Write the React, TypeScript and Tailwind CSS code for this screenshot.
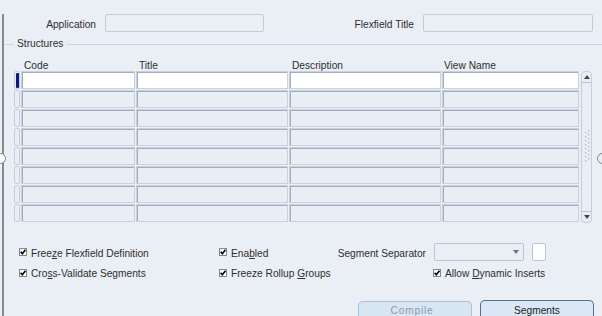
import React from 'react'

const rows = [0, 1, 2, 3, 4, 5, 6, 7]

function Check() {
  return (
    <svg width="8" height="8" viewBox="0 0 8 8" className="shrink-0">
      <rect x="0.5" y="0.5" width="7" height="7" fill="#fff" stroke="#7e8894" />
      <path d="M1.6 3.8 L3.3 5.7 L6.5 1.8" fill="none" stroke="#000" strokeWidth="1.6" />
    </svg>
  )
}

function Cell({ w, white }: { w: string; white?: boolean }) {
  return (
    <div
      className={`${w} h-[18px] border border-[#c6d1e1] shadow-[inset_1px_1px_0_#a3acb8] ${
        white ? 'bg-white' : 'bg-[#e9edf4]'
      }`}
    />
  )
}

export default function App() {
  return (
    <div className="relative w-[602px] h-[316px] overflow-hidden bg-[#eaeef5] pl-[2px] font-['Liberation_Sans',Arial,sans-serif] text-[10.2px] leading-[12px] text-[#2e2e2e]">
      <div className="h-full border-l-2 border-[#858a90]">
        {/* header fields */}
        <div className="flex items-center h-[18px] mt-[14px]">
          <div className="w-[92px] text-right pt-[3px]">Application</div>
          <div className="ml-[9px] w-[159px] h-[18px] border border-[#c3cbd6] rounded-[2px] bg-[#eaeef5]" />
          <div className="w-[150px] text-right pt-[3px]">Flexfield Title</div>
          <div className="ml-[9px] w-[170px] h-[18px] border border-[#c3cbd6] rounded-[2px] bg-[#eaeef5]" />
        </div>

        {/* Structures legend */}
        <div className="flex items-center h-[12px] mt-[6px]">
          <div className="ml-px w-[9px] h-px bg-[#c8d3e3]" />
          <div className="ml-[3px]">Structures</div>
          <div className="ml-[4px] flex-1 h-px bg-[#c8d3e3]" />
        </div>

        {/* column headers */}
        <div className="flex h-[11px] mt-[10px] pl-[17px]">
          <div className="w-[115px] pl-[3px]">Code</div>
          <div className="w-[153px] pl-[3px]">Title</div>
          <div className="w-[153px] pl-[3px]">Description</div>
          <div className="w-[138px] pl-[2px]">View Name</div>
        </div>

        {/* grid */}
        <div className="flex pl-[10px]">
          <div className="flex flex-col gap-px">
            {rows.map((r) => (
              <div key={r} className="flex h-[18px]">
                <div className="w-[6px] h-[18px] rounded-[2px] border border-[#c3cfe1] bg-[#e9eef6] flex items-center">
                  {r === 0 && <div className="ml-px w-[3px] h-[15px] rounded-[1px] bg-[#0b1a7a]" />}
                </div>
                <div className="ml-px" />
                <Cell w="w-[114px]" white={r === 0} />
                <div className="ml-px" />
                <Cell w="w-[152px]" white={r === 0} />
                <div className="ml-px" />
                <Cell w="w-[152px]" white={r === 0} />
                <div className="ml-px" />
                <Cell w="w-[137px]" white={r === 0} />
              </div>
            ))}
          </div>
          {/* scrollbar */}
          <div className="ml-[2px] w-[11px] h-[152px] rounded-[4px] border border-[#c4cedc] bg-[#e9eef5] flex flex-col">
            <div className="h-[11px] border-b border-[#b8c3d2] flex items-center justify-center">
              <svg width="6" height="4" viewBox="0 0 6 4">
                <path d="M0 4 L3 0 L6 4 Z" fill="#3f4650" />
              </svg>
            </div>
            <div className="flex-1 flex items-center justify-center">
              <svg width="8" height="34" viewBox="0 0 8 34">
                {[0, 1, 2, 3, 4, 5, 6, 7].map((i) => (
                  <g key={i} fill="#a9b4c3">
                    <rect x="5" y={i * 4} width="1.3" height="1.3" />
                    <rect x="2" y={i * 4 + 2} width="1.3" height="1.3" />
                  </g>
                ))}
              </svg>
            </div>
            <div className="h-[11px] border-t border-[#b8c3d2] flex items-center justify-center">
              <svg width="6" height="4" viewBox="0 0 6 4">
                <path d="M0 0 L6 0 L3 4 Z" fill="#3f4650" />
              </svg>
            </div>
          </div>
        </div>

        {/* options row 1 */}
        <div className="flex items-center h-[18px] mt-[20px] pl-[15px]">
          <div className="w-[200px] flex items-center gap-[4px]">
            <Check />
            <span className="pt-[3px]">
              Free<span className="underline">z</span>e Flexfield Definition
            </span>
          </div>
          <div className="w-[116px] flex items-center gap-[4px]">
            <Check />
            <span className="pt-[3px]">
              Ena<span className="underline">b</span>led
            </span>
          </div>
          <div className="w-[91px] text-right pt-[3px]">Segment Separator</div>
          <div className="ml-[8px] w-[90px] h-[18px] border border-[#bcc5d1] rounded-[2px] bg-[#eaeef5] flex items-center justify-end pr-[4px]">
            <svg width="6" height="4" viewBox="0 0 6 4">
              <path d="M0 0 L6 0 L3 4 Z" fill="#6b7480" />
            </svg>
          </div>
          <div className="ml-[8px] w-[14px] h-[18px] border border-[#bcc5d1] rounded-[2px] bg-white" />
        </div>

        {/* options row 2 */}
        <div className="flex items-center h-[12px] mt-[6px] pl-[15px]">
          <div className="w-[200px] flex items-center gap-[4px]">
            <Check />
            <span className="pt-px">
              Cro<span className="underline">s</span>s-Validate Segments
            </span>
          </div>
          <div className="w-[214px] flex items-center gap-[4px]">
            <Check />
            <span className="pt-px">
              Freeze Rollup <span className="underline">G</span>roups
            </span>
          </div>
          <div className="flex items-center gap-[4px]">
            <Check />
            <span className="pt-px">
              Allow <span className="underline">D</span>ynamic Inserts
            </span>
          </div>
        </div>

        {/* buttons */}
        <div className="flex items-start mt-[21px] pl-[354px] gap-[8px]">
          <button className="mt-px w-[114px] h-[22px] rounded-t-[5px] border border-b-0 border-[#a9c1d9] bg-[#d8e5f2] text-[#8b9bb0] tracking-[0.8px] flex justify-center pt-[3px] pr-[6px]">
            Compile
          </button>
          <button className="w-[114px] h-[22px] rounded-t-[5px] border border-b-0 border-[#53708f] bg-[#dbe7f4] text-[#222] flex justify-center pt-[4px]">
            Segments
          </button>
        </div>
      </div>

      {/* edge handles */}
      <div className="absolute left-[-5px] top-[153px] w-[11px] h-[11px] rounded-full border border-[#7d8288] bg-white" />
      <div className="absolute left-[597px] top-[153px] w-[11px] h-[11px] rounded-full border border-[#7d8288] bg-[#eaeef5]" />
    </div>
  )
}
